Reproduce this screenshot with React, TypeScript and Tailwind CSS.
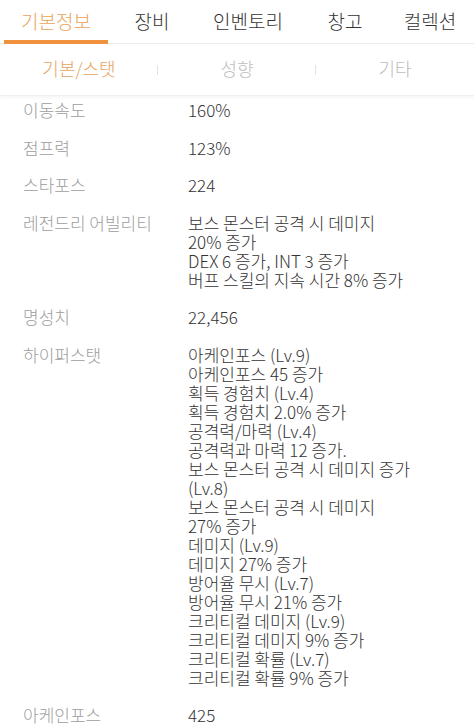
const FONT = "font-['Noto_Sans_CJK_KR','Noto_Sans',sans-serif]";

const mainTabs = [
  { label: "기본정보", w: "w-[104px]" },
  { label: "장비", w: "w-[88px]" },
  { label: "인벤토리", w: "w-[104px]" },
  { label: "창고", w: "w-[90px]" },
  { label: "컬렉션", w: "w-[80px]" },
];
const subTabs = ["기본/스탯", "성향", "기타"];

const rows: { label: string; lines: string[] }[] = [
  { label: "이동속도", lines: ["160%"] },
  { label: "점프력", lines: ["123%"] },
  { label: "스타포스", lines: ["224"] },
  {
    label: "레전드리 어빌리티",
    lines: [
      "보스 몬스터 공격 시 데미지",
      "20% 증가",
      "DEX 6 증가, INT 3 증가",
      "버프 스킬의 지속 시간 8% 증가",
    ],
  },
  { label: "명성치", lines: ["22,456"] },
  {
    label: "하이퍼스탯",
    lines: [
      "아케인포스 (Lv.9)",
      "아케인포스 45 증가",
      "획득 경험치 (Lv.4)",
      "획득 경험치 2.0% 증가",
      "공격력/마력 (Lv.4)",
      "공격력과 마력 12 증가.",
      "보스 몬스터 공격 시 데미지 증가",
      "(Lv.8)",
      "보스 몬스터 공격 시 데미지",
      "27% 증가",
      "데미지 (Lv.9)",
      "데미지 27% 증가",
      "방어율 무시 (Lv.7)",
      "방어율 무시 21% 증가",
      "크리티컬 데미지 (Lv.9)",
      "크리티컬 데미지 9% 증가",
      "크리티컬 확률 (Lv.7)",
      "크리티컬 확률 9% 증가",
    ],
  },
  { label: "아케인포스", lines: ["425"] },
];

export default function App() {
  return (
    <div className={`${FONT} h-[725px] w-[474px] overflow-hidden bg-white`}>
      {/* ---- Main tabs ---- */}
      <nav className="flex h-[44px] items-stretch border-b border-[#ececec] pl-[4px]">
        {mainTabs.map((t, i) => (
          <div
            key={t.label}
            className={`relative flex items-center justify-center ${t.w} text-[19px] font-light ${
              i === 0 ? "text-[#e9a35a]" : "text-[#333]"
            }`}
          >
            {t.label}
            {i === 0 && (
              <span className="absolute bottom-[-1px] left-0 right-0 h-[4px] bg-[#f0913d]" />
            )}
          </div>
        ))}
      </nav>

      {/* ---- Sub tabs ---- */}
      <div className="grid h-[52px] grid-cols-3 border-b border-[#f0f0f0] shadow-[0_2px_3px_rgba(0,0,0,0.04)]">
        {subTabs.map((t, i) => (
          <div key={t} className="relative flex items-center justify-center pb-[2px] text-[18px] font-light">
            <span className={i === 0 ? "text-[#e6a360]" : "text-[#bdbdbd]"}>{t}</span>
            {i < 2 && (
              <span className="absolute right-0 top-1/2 h-[10px] w-px -translate-y-1/2 bg-[#e2e2e2]" />
            )}
          </div>
        ))}
      </div>

      {/* ---- Stat rows ---- */}
      <div className="flex flex-col gap-[18.5px] pl-[23px] pt-[4px] text-[17px] font-light leading-[19px]">
        {rows.map((r) => (
          <div key={r.label} className="flex">
            <div className="w-[165px] shrink-0 text-[#9d9d9d]">{r.label}</div>
            <div className="text-[#333]">
              {r.lines.map((l, i) => (
                <div key={i}>{l}</div>
              ))}
            </div>
          </div>
        ))}
      </div>
    </div>
  );
}
